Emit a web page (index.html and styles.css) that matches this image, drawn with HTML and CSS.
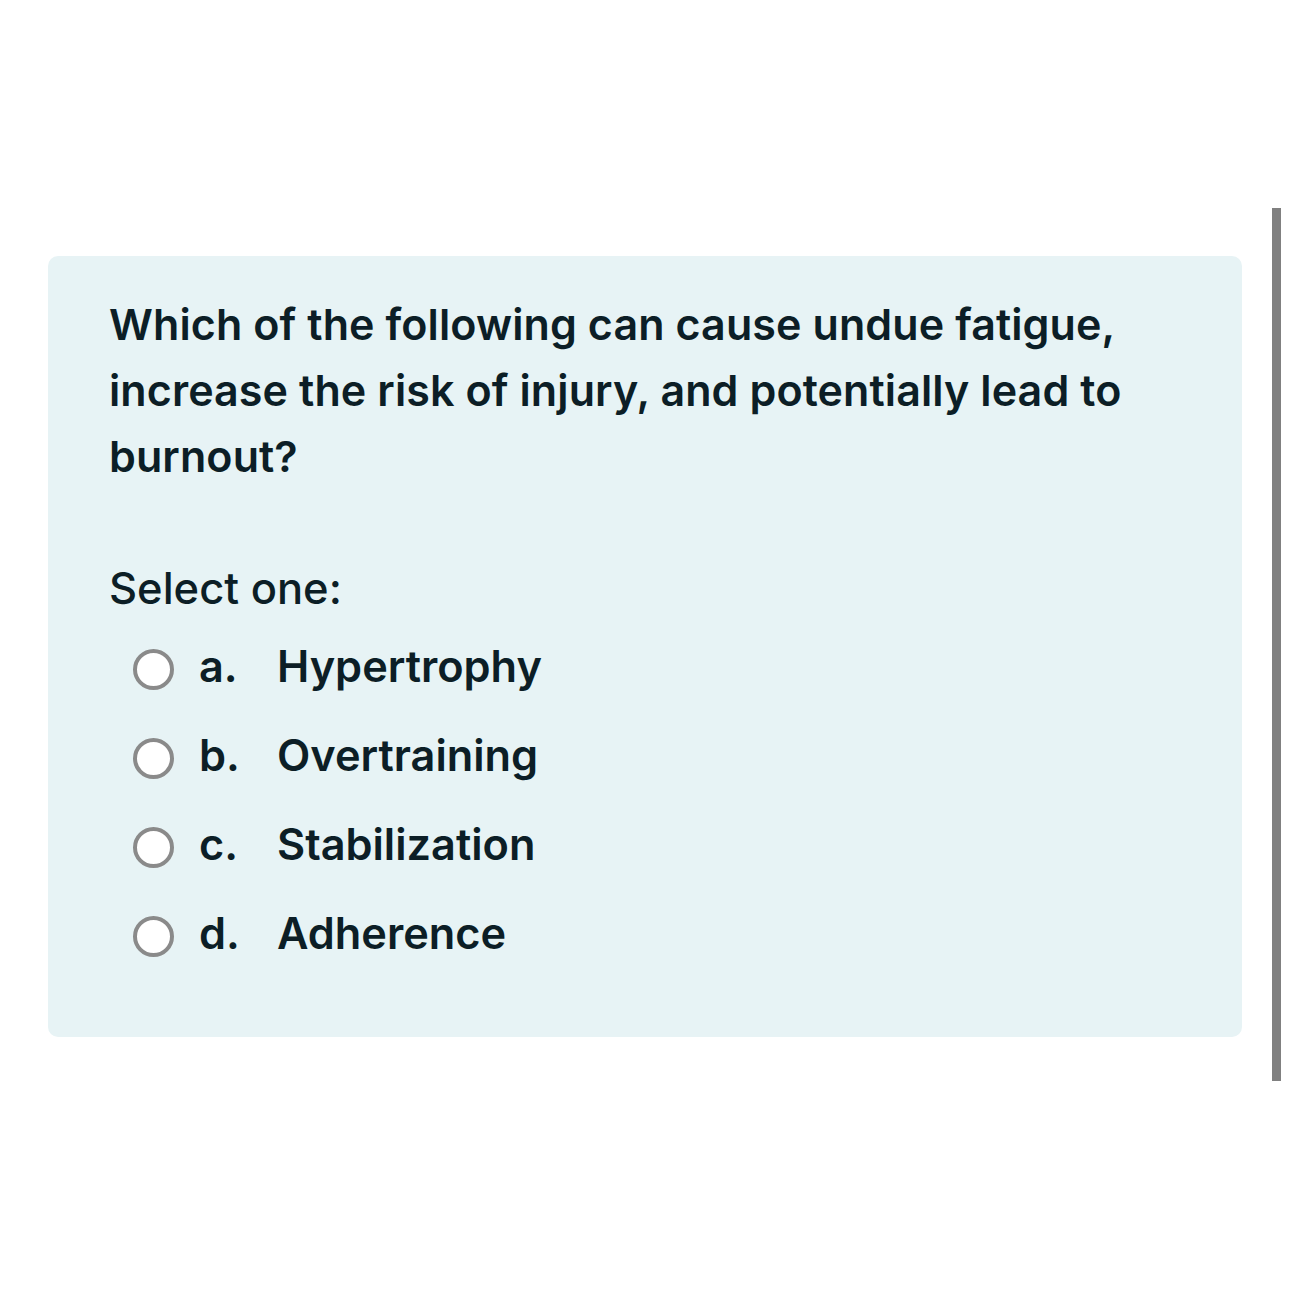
FILE: index.html
```html
<!DOCTYPE html>
<html>
<head>
<meta charset="utf-8">
<link rel="stylesheet" href="styles.css">
</head>
<body>
<div class="page">
  <div class="card">
    <p class="question">Which of the following can cause undue fatigue, increase the risk of injury, and potentially lead to burnout?</p>
    <div class="prompt">Select one:</div>
    <div class="answers">
      <label class="option"><span class="radio"></span><span class="letter">a.</span><span class="text">Hypertrophy</span></label>
      <label class="option"><span class="radio"></span><span class="letter">b.</span><span class="text">Overtraining</span></label>
      <label class="option"><span class="radio"></span><span class="letter">c.</span><span class="text">Stabilization</span></label>
      <label class="option"><span class="radio"></span><span class="letter">d.</span><span class="text">Adherence</span></label>
    </div>
  </div>
  <div class="scrollbar"></div>
</div>
</body>
</html>
```
FILE: styles.css
```css
html, body {
  margin: 0;
  padding: 0;
  background: #ffffff;
}
body {
  font-family: Inter, "Noto Sans", sans-serif;
  color: #0c1e26;
  width: 1290px;
  height: 1290px;
  overflow: hidden;
}
.page {
  position: relative;
  padding: 256px 48px 0 48px;
}
.card {
  box-sizing: border-box;
  width: 1194px;
  height: 781px;
  background: #e7f3f5;
  border-radius: 10px;
  padding: 35px 40px 0 61px;
}
.question {
  margin: 0;
  font-size: 43px;
  font-weight: 600;
  line-height: 66px;
  letter-spacing: 0.1px;
}
.prompt {
  margin-top: 66px;
  font-size: 43.5px;
  font-weight: 500;
  line-height: 66px;
}
.answers {
  display: flex;
  flex-direction: column;
  gap: 23px;
  margin-top: 12px;
}
.option {
  display: flex;
  align-items: center;
  height: 66px;
  font-size: 43.3px;
  font-weight: 600;
  padding-left: 24px;
}
.radio {
  box-sizing: border-box;
  width: 41px;
  height: 41px;
  margin-top: 6px;
  border-radius: 50%;
  border: 4px solid #8a8a8a;
  background: #ffffff;
  flex: none;
}
.letter {
  margin-left: 25px;
  width: 78px;
}
.scrollbar {
  position: absolute;
  left: 1272px;
  top: 208px;
  width: 9px;
  height: 873px;
  background: #808080;
}
```
